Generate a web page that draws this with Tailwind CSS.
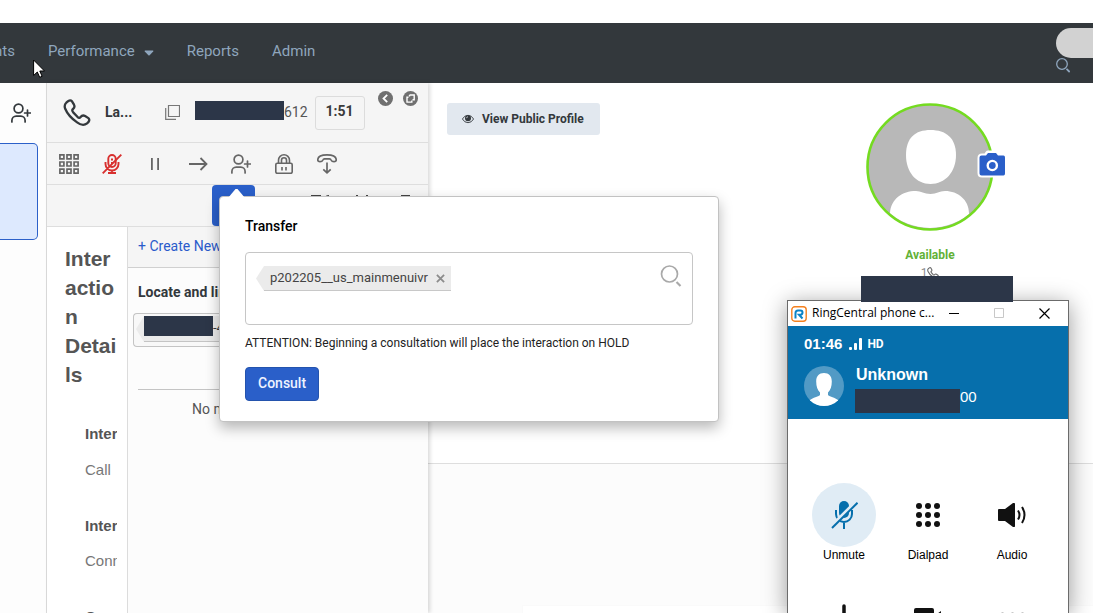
<!DOCTYPE html>
<html lang="en">
<head>
  <meta charset="UTF-8" />
  <meta name="viewport" content="width=device-width, initial-scale=1.0" />
  <title>Agent Workspace</title>
  <script src="https://cdn.jsdelivr.net/npm/@tailwindcss/browser@4"></script>
</head>
<body class="relative flex flex-col h-screen overflow-hidden bg-white font-[Roboto,sans-serif] text-[#33383c]">

  <!-- Navigation -->
  <header class="mt-[23px] h-[60px] shrink-0 flex justify-between bg-[#33383c] text-[15px] text-[#8fa6bd]">
    <nav class="flex items-center gap-[33px] pb-1">
      <a href="#" class="-ml-[6px]">nts</a>
      <a href="#" class="flex items-center gap-[9px]">Performance
        <svg class="w-[10px] h-[6px] mt-1" viewBox="0 0 10 6" fill="currentColor"><path d="M1 .5h8q.8.3.2 1L5.600 5.200q-.6.5-1.200 0L.8 1.500Q.2.8 1 .5z"/></svg>
      </a>
      <a href="#">Reports</a>
      <a href="#">Admin</a>
    </nav>
    <div class="w-[37px] pt-[5px]">
      <div class="h-[30px] rounded-l-full bg-[#d2d2d2]"></div>
      <button aria-label="Search" class="block">
        <svg class="w-[14px] h-[15px]" viewBox="0 0 14 15" fill="none" stroke="currentColor" stroke-width="1.300"><circle cx="6" cy="6" r="5.300"/><path d="M10.500 10.800l3.200 3.200" stroke-width="1.800"/></svg>
      </button>
    </div>
  </header>

  <main class="flex flex-1 min-h-0">

    <!-- Contact rail -->
    <aside class="w-[47px] shrink-0 border-r border-[#dcdcdc] bg-[#fdfdfd]">
      <button aria-label="Add contact" class="block ml-[11px] mt-5">
        <svg class="w-5 h-5" viewBox="0 0 20 20" fill="none" stroke="currentColor" stroke-width="1.700" stroke-linecap="round"><circle cx="7.500" cy="5.500" r="4.400"/><path d="M.9 19v-1.500a4.300 4.300 0 0 1 4.300-4.300h4.600a4.300 4.300 0 0 1 4.300 4.300V19M16.500 7v6M13.600 10h5.900"/></svg>
      </button>
      <div class="mt-5 w-[38px] h-[97px] rounded-r-[5px] border border-l-0 border-[#2b60c9] bg-[#dde9fe]"></div>
    </aside>

    <!-- Interaction panel -->
    <section class="relative z-10 w-[381px] shrink-0 flex flex-col bg-[#f5f5f5] shadow-[2px_0_4px_rgba(0,0,0,0.15)]">

      <div class="h-[60px] shrink-0 flex items-center border-b border-[#dedede] pl-4">
        <svg class="w-[28px] h-[28px]" viewBox="0 0 28 28" fill="none" stroke="currentColor" stroke-width="2.300" stroke-linejoin="round"><path d="M3.200 3.800C5 1.500 7.500.7 9 2.300l2 3.400c1 1.900.6 3-1 4.300-1.200 1-1 1.900.2 3.400l4.200 4.400c1.400 1.200 2.300 1.300 3.200.2 1.300-1.700 2.700-2 4.500-1l3.300 2.100c1.600 1.300.9 3.600-1.300 5.300-2.600 2-6 2-10-1C8.500 19.600 4.300 14.800 2.200 9.800c-.9-2.400-.5-4.500 1-6z"/></svg>
        <span class="ml-[14px] w-[60px] pb-[2px] text-sm font-bold">La...</span>
        <button aria-label="Copy" class="text-[#777]">
          <svg class="w-[15px] h-[15px]" viewBox="0 0 15 15" fill="none" stroke="currentColor"><path d="M3.500.5h11v11h-11z" stroke-width="1.200"/><path d="M.7 3v11.300H11" stroke-width="1.200"/></svg>
        </button>
        <span class="ml-[15px] w-[89px] h-[19px] -mt-1 bg-[#2c3648]"></span>
        <span class="pb-[2px] text-sm text-[#555]">612</span>
        <span class="ml-[7px] w-[50px] h-[34px] flex items-center justify-center pb-1 rounded-[3px] border border-[#dcdcdc] text-sm font-bold text-[#3b3b3b]">1:51</span>
        <div class="self-start flex gap-[10px] ml-[13px] mt-2">
          <button aria-label="Back">
            <svg class="w-[15px] h-[15px]" viewBox="0 0 15 15"><circle cx="7.500" cy="7.500" r="7.500" fill="#707070"/><path d="M9.200 3.800L5.500 7.500l3.700 3.700" fill="none" stroke="#fff" stroke-width="1.800"/></svg>
          </button>
          <button aria-label="Pop out">
            <svg class="w-[15px] h-[15px]" viewBox="0 0 15 15" fill="none" stroke="#fff" stroke-width="1.400"><circle cx="7.500" cy="7.500" r="7.500" fill="#707070" stroke="none"/><path d="M6.500 4h4.700v4.700H9.500M6.500 4v1.500M5.500 6.300H4v4.800h4.800V9.500"/></svg>
          </button>
        </div>
      </div>

      <!-- Call controls -->
      <div class="h-[42px] shrink-0 flex border-b border-[#dedede] text-[#666]">
        <button aria-label="Keypad" class="w-[43px] flex items-center justify-center">
          <svg class="w-[20px] h-[20px]" viewBox="0 0 20 20" fill="none" stroke="currentColor" stroke-width="1.700"><path d="M.9.9h4v4h-4zM8 .9h4v4H8zM15.100.9h4v4h-4zM.9 8h4v4h-4zM8 8h4v4H8zM15.100 8h4v4h-4zM.9 15.100h4v4h-4zM8 15.100h4v4H8zM15.100 15.100h4v4h-4z"/></svg>
        </button>
        <button aria-label="Unmute microphone" class="w-[43px] flex items-center justify-center text-[#d8302f]">
          <svg class="w-[20px] h-[20px]" viewBox="0 0 20 20" fill="none" stroke="currentColor" stroke-width="1.900"><rect x="6.300" y="1" width="7.400" height="12" rx="3.700"/><path d="M3.500 8v2a6.500 6.500 0 0 0 13 0V8M10 16.500V19M6 19h8M.7 19.300L19.300.7M9 9h3M9 5.500h2"/></svg>
        </button>
        <button aria-label="Pause" class="w-[43px] flex items-center justify-center">
          <svg class="w-[10px] h-[12px]" viewBox="0 0 10 12" fill="currentColor"><path d="M1 0h1.800v12H1zM7.200 0H9v12H7.200z"/></svg>
        </button>
        <button aria-label="Forward" class="w-[43px] flex items-center justify-center">
          <svg class="w-[20px] h-[14px]" viewBox="0 0 20 14" fill="none" stroke="currentColor" stroke-width="1.800"><path d="M1 7h17.500M12.500 1l6 6-6 6"/></svg>
        </button>
        <button aria-label="Transfer call" class="w-[43px] flex items-center justify-center">
          <svg class="w-5 h-5" viewBox="0 0 20 20" fill="none" stroke="currentColor" stroke-width="1.700" stroke-linecap="round"><circle cx="7.500" cy="5.500" r="4.400"/><path d="M.9 19v-1.500a4.300 4.300 0 0 1 4.300-4.300h4.600a4.300 4.300 0 0 1 4.300 4.300V19M16.500 7v6M13.600 10h5.900"/></svg>
        </button>
        <button aria-label="Lock" class="w-[43px] flex items-center justify-center">
          <svg class="w-[18px] h-[20px]" viewBox="0 0 18 20" fill="none" stroke="currentColor" stroke-width="1.600"><rect x=".8" y="9.300" width="16.400" height="10" rx="1.500"/><path d="M3.500 9V6.300a5.500 5.500 0 0 1 11 0V9M6.500 9V6.300a2.500 2.500 0 0 1 5 0V9M7 13v3.500M11 13v3.500"/></svg>
        </button>
        <button aria-label="Hang up" class="w-[43px] flex items-center justify-center">
          <svg class="w-[20px] h-[20px]" viewBox="0 0 20 20" fill="none" stroke="currentColor" stroke-width="1.700" stroke-linejoin="round"><path d="M.8 5.500C1 2.300 5 .9 10 .9s9 1.400 9.200 4.600c.1 1.600-.8 2.200-2.200 2.200-1.600 0-2.400-.6-2.900-1.700-.3-.8-.8-1.200-1.600-1.200h-5c-.8 0-1.300.4-1.600 1.200C5.400 7.100 4.600 7.700 3 7.700 1.600 7.700.7 7.100.8 5.500zM10 8.500v10.300M6.300 15.300l3.700 3.600 3.700-3.600"/></svg>
        </button>
      </div>

      <!-- Tabs -->
      <div class="h-[42px] shrink-0 flex items-start border-b border-[#dedede] pl-[165px]">
        <button aria-label="Transfer tab" class="w-[43px] h-[41px] rounded-[4px] bg-[#2a5fc9]"></button>
        <svg class="ml-[56px] mt-[9px] w-[100px] h-3" viewBox="0 0 100 12" fill="none" stroke="#444" stroke-width="2"><path d="M0 2h10M5 1v10M15 11V4q0-2 3-2M46 1v10M56 1v10M91 11V2h8"/></svg>
      </div>

      <div class="flex flex-1 min-h-0">
        <div class="w-[81px] shrink-0 border-r border-[#dcdcdc] bg-white px-[10px] pl-[18px] pt-[17px] font-['Liberation_Sans',sans-serif] text-[#555]">
          <h2 class="w-[52px] text-[21px] leading-[29px] font-bold break-words">Interaction Details</h2>
          <dl class="w-[32px] ml-5 mt-[35px] overflow-hidden text-[15px] leading-5 whitespace-nowrap">
            <dt class="font-bold">Inter</dt>
            <dd class="mt-4 mb-9 text-[#777]">Call</dd>
            <dt class="font-bold">Inter</dt>
            <dd class="mt-[15px] mb-9 text-[#777]">Conn</dd>
            <dt class="font-bold">C</dt>
          </dl>
        </div>

        <div class="flex-1 min-w-0 bg-[#fcfcfc] text-sm whitespace-nowrap overflow-hidden">
          <div class="h-[41px] flex items-center border-b border-[#d0d0d0] bg-[#f5f5f5] pl-[10px] pb-[2px]">
            <a href="#" class="text-[#2a5bcb]">+ Create New</a>
          </div>
          <h3 class="pl-[10px] mt-[14px] leading-5 font-bold">Locate and link</h3>
          <div class="mt-[11px] ml-[5px] h-[34px] flex rounded-[4px] border border-r-0 border-[#c4c4c4] bg-[#f8f8f8] pl-[2px] pt-[2px]">
            <svg class="w-2 h-[26px]" viewBox="0 0 8 26"><path d="M8 0v26L0 13z" fill="#ebebeb"/></svg>
            <div class="flex h-[26px] flex-1 border-b border-[#c4c4c4] bg-[#ebebeb]">
              <span class="w-[69px] h-5 bg-[#2c3648]"></span>
              <span class="leading-6 text-[13px]">-4</span>
            </div>
          </div>
          <div class="ml-[10px] mt-[42px] border-t border-[#c4c4c4] pt-[9px] pl-[54px] text-[#555]">No matches</div>
        </div>
      </div>
    </section>

    <!-- Profile -->
    <section class="flex-1 min-w-0 flex flex-col bg-[#fcfcfc]">
      <div class="h-[381px] shrink-0 flex items-start justify-between border-b border-[#dedede] bg-white pl-[19px] pr-[99px] pt-5">
        <button class="h-8 flex items-center gap-2 rounded-[3px] bg-[#e2e8ef] pl-[15px] pr-4 text-xs font-bold">
          <svg class="w-3 h-[10px]" viewBox="0 0 12 10"><path d="M.4 5Q2.500 1.300 6 1.300T11.600 5Q9.500 8.700 6 8.700T.4 5z" fill="none" stroke="currentColor" stroke-width=".9"/><circle cx="6" cy="4.300" r="3" fill="currentColor"/><path d="M4.500 4.200Q4.600 2.800 6 2.700" fill="none" stroke="#e2e8ef" stroke-width=".7"/></svg>
          View Public Profile
        </button>
        <div class="relative w-32 flex flex-col items-center">
          <svg class="w-32 h-32" viewBox="0 0 128 128">
            <clipPath id="face"><circle cx="64" cy="64" r="61"/></clipPath>
            <circle cx="64" cy="64" r="62.500" fill="#b8b8b8"/>
            <g clip-path="url(#face)" fill="#fff">
              <path d="M64.500 27C80 27 90 35 90 52c0 17-11 29-25.500 29S40 69 40 52c0-17 9-25 24.500-25z"/>
              <path d="M24 128v-18c1-14 12-22 26-22 5 0 8 3 14.500 3S73 88 79 88c13 0 24 9 24 22v18z"/>
            </g>
            <circle cx="64" cy="64" r="62.500" fill="none" stroke="#74db20" stroke-width="2.600"/>
          </svg>
          <button aria-label="Change photo" class="absolute left-[111px] top-[47px]">
            <svg class="w-[30px] h-[29px]" viewBox="0 0 30 29"><path d="M5 6h4l2-3h8l2 3h4q2 0 2 2v15q0 2-2 2H5q-2 0-2-2V8q0-2 2-2z" fill="#2a5fc9" stroke="#fff" stroke-width="5" stroke-linejoin="round"/><path d="M4.500 5.500H9L11 3h8l2 2.500h5.500Q28 5.500 28 7.500v16q0 2-1.500 2h-22q-2 0-2-2v-16q0-2 2-2z" fill="#2a5fc9"/><circle cx="15.300" cy="15.500" r="4.600" fill="none" stroke="#fff" stroke-width="2.400"/></svg>
          </button>
          <p class="mt-4 text-xs leading-4 font-bold text-[#62b137]">Available</p>
          <p class="mt-[2px] flex items-center text-xs leading-4 text-[#8d8d8d]">1
            <svg class="w-3 h-3" viewBox="0 0 28 28" fill="none" stroke="#666" stroke-width="2.500"><path d="M3.200 3.800C5 1.500 7.500.7 9 2.300l2 3.400c1 1.900.6 3-1 4.300-1.200 1-1 1.900.2 3.400l4.200 4.400c1.400 1.200 2.300 1.300 3.200.2 1.300-1.700 2.700-2 4.500-1l3.300 2.100c1.600 1.300.9 3.600-1.300 5.300-2.600 2-6 2-10-1C8.500 19.600 4.300 14.800 2.200 9.800c-.9-2.400-.5-4.500 1-6z"/></svg>
          </p>
        </div>
      </div>
      <div class="mt-[141px] ml-[94px] flex-1 bg-white border-t border-l border-[#fafafa]"></div>
    </section>
  </main>

  <!-- Transfer popover -->
  <div role="dialog" aria-labelledby="transferTitle" class="absolute z-20 left-[219px] top-[196px] w-[500px] rounded-[4px] border border-[#c2c2c2] bg-white px-[25px] pt-[19px] pb-5 shadow-[0_6px_14px_rgba(0,0,0,0.28)]">
    <svg class="absolute left-2 -top-[9px] w-[17px] h-[10px]" viewBox="0 0 17 10"><path d="M0 10l7.500-9h2L17 10z" fill="#fff"/></svg>
    <h2 id="transferTitle" class="text-sm font-medium leading-5 text-black">Transfer</h2>
    <div class="mt-4 h-[73px] flex items-start justify-between rounded-[4px] border border-[#c6c6c6] px-[10px] pt-3">
      <div class="flex mt-px h-[25px] text-[13px] text-[#444]">
        <svg class="w-2 h-[25px]" viewBox="0 0 8 25"><path d="M8 0v25L0 12.500z" fill="#ebebeb"/></svg>
        <span class="flex items-center gap-2 border-b border-[#c8c8c8] bg-[#ebebeb] pl-[6px] pr-[6px]">p202205__us_mainmenuivr
          <button aria-label="Remove">
            <svg class="w-[9px] h-[9px]" viewBox="0 0 10 10" stroke="#8c8c8c" stroke-width="2"><path d="M1 1l8 8M9 1L1 9"/></svg>
          </button>
        </span>
      </div>
      <button aria-label="Search contacts">
        <svg class="w-[22px] h-[22px]" viewBox="0 0 22 22" fill="none" stroke="#a9a9a9"><circle cx="9.500" cy="9" r="8" stroke-width="1.700"/><path d="M16.500 17l4 4" stroke-width="2.200"/></svg>
      </button>
    </div>
    <p class="mt-[10px] text-xs leading-4 text-[#222]">ATTENTION: Beginning a consultation will place the interaction on HOLD</p>
    <button class="mt-4 h-[34px] rounded-[4px] border border-[#2453ad] bg-[#2a5fc9] px-3 pb-[2px] text-sm font-medium text-[#eef3ff]">Consult</button>
  </div>

  <!-- Softphone window -->
  <div class="absolute z-20 right-6 top-[300px] bottom-0 w-[282px] overflow-hidden border border-b-0 border-[#6b6b6b] bg-white shadow-[0_4px_22px_rgba(0,0,0,0.4)] font-['Liberation_Sans',sans-serif]">
    <div class="h-[25px] flex items-center pl-[3px] font-['Open_Sans',sans-serif] text-xs text-black">
      <svg class="w-4 h-4" viewBox="0 0 16 16" fill="none"><rect x=".8" y=".8" width="14.400" height="14.400" rx="3" fill="#fff" stroke="#f48120" stroke-width="1.400"/><path d="M4.500 12.500V7q0-2.500 2.500-2.500h2.500q2 0 2 2T9.500 8.700H8l3.500 3.800" stroke="#0a83c6" stroke-width="2"/></svg>
      <span class="ml-[5px] pb-px">RingCentral phone c...</span>
      <div class="ml-auto flex items-center gap-[34px] pr-[18px]">
        <button aria-label="Minimize"><svg class="w-[11px] h-[11px]" viewBox="0 0 11 11"><path d="M0 5.500h10" stroke="#000"/></svg></button>
        <button aria-label="Maximize" disabled><svg class="w-[11px] h-[11px]" viewBox="0 0 11 11"><path d="M.5.5h9v9h-9z" fill="none" stroke="#c8c8c8"/></svg></button>
        <button aria-label="Close"><svg class="w-[11px] h-[11px]" viewBox="0 0 11 11"><path d="M.5.5l10 10M10.500.5l-10 10" stroke="#000" stroke-width="1.200"/></svg></button>
      </div>
    </div>
    <div class="h-[93px] bg-[#066fac] px-4 pt-2 text-white">
      <div class="flex items-center text-[15px] leading-5 font-bold">01:46
        <svg class="ml-[7px] w-[13px] h-3" viewBox="0 0 13 12" fill="currentColor"><rect y="9" width="3" height="3" rx="1"/><rect x="5" y="5" width="3" height="7" rx="1"/><rect x="10" width="3" height="12" rx="1"/></svg>
        <span class="ml-[5px] font-[Roboto,sans-serif] text-xs">HD</span>
      </div>
      <div class="flex mt-[10px] gap-[11px]">
        <svg class="w-10 h-10 mt-[2px]" viewBox="0 0 40 40">
          <clipPath id="caller"><circle cx="20" cy="20" r="20"/></clipPath>
          <g clip-path="url(#caller)"><path d="M0 0h40v40H0z" fill="#529ac5"/><path d="M20 7c5 0 7.800 3 7.800 8.500 0 5-1.300 8.500-3.800 11v2.500c2 2 7 2.500 10 5V40H6v-6c3-2.500 8-3 10-5v-2.500c-2.500-2.500-3.800-6-3.800-11C12.200 10 15 7 20 7z" fill="#fff"/></g>
        </svg>
        <div>
          <p class="mt-px ml-px text-base leading-5 font-bold">Unknown</p>
          <p class="mt-1 flex text-[15px] leading-4"><span class="w-[105px] h-6 bg-[#2c3648]"></span>00</p>
        </div>
      </div>
    </div>
    <div class="grid grid-cols-3 gap-y-[23px] px-[14px] pt-16 text-xs leading-4 text-black">
      <button class="flex flex-col items-center">
        <span class="w-16 h-16 flex items-center justify-center rounded-full bg-[#e0ecf5]">
          <svg class="w-[28px] h-[28px]" viewBox="0 0 28 28"><rect x="9" y="0" width="10" height="17" rx="5" fill="#066fac"/><path d="M6 9v4a8 8 0 0 0 16 0V9M14 21v7" fill="none" stroke="#066fac" stroke-width="2"/><path d="M1 26L26.500.5" stroke="#e0ecf5" stroke-width="4"/><path d="M2 27L27.500 1.800" stroke="#066fac" stroke-width="2"/></svg>
        </span>Unmute
      </button>
      <button class="flex flex-col items-center">
        <span class="w-16 h-16 flex items-center justify-center">
          <svg class="w-6 h-6" viewBox="0 0 24 24" fill="#111"><circle cx="3" cy="3" r="3"/><circle cx="12" cy="3" r="3"/><circle cx="21" cy="3" r="3"/><circle cx="3" cy="12" r="3"/><circle cx="12" cy="12" r="3"/><circle cx="21" cy="12" r="3"/><circle cx="3" cy="21" r="3"/><circle cx="12" cy="21" r="3"/><circle cx="21" cy="21" r="3"/></svg>
        </span>Dialpad
      </button>
      <button class="flex flex-col items-center">
        <span class="w-16 h-16 flex items-center justify-center">
          <svg class="w-[28px] h-6" viewBox="0 0 28 24" fill="#111"><path d="M1 6h6l8-6q2-.5 2 1v22q0 1.500-2 1l-8-6H1q-1 0-1-1V7q0-1 1-1z"/><path d="M20 7.500q3 4.500 0 9M24 4q5 8 0 16" fill="none" stroke="#111" stroke-width="2"/></svg>
        </span>Audio
      </button>
      <button aria-label="Add" class="flex items-center justify-center h-16"><svg class="w-7 h-7" viewBox="0 0 28 28" stroke="#111" stroke-width="3.500" stroke-linecap="round"><path d="M14 2v24M2 14h24"/></svg></button>
      <button aria-label="Video" class="flex items-center justify-center h-16"><svg class="w-7 h-5" viewBox="0 0 28 20" fill="#111"><path d="M2 0h16q2 0 2 2v16q0 2-2 2H2q-2 0-2-2V2q0-2 2-2zM21.500 7L27 3v14l-5.500-4z"/></svg></button>
      <button aria-label="More" class="flex items-center justify-center h-16"><svg class="w-[27px] h-3" viewBox="0 0 27 12" fill="#111"><circle cx="3.500" cy="4" r="3.300"/><circle cx="13.500" cy="4" r="3.300"/><circle cx="23.500" cy="4" r="3.300"/></svg></button>
    </div>
  </div>

  <!-- Masked agent name -->
  <div class="absolute z-30 right-20 top-[276px] w-[152px] h-[26px] bg-[#2c3648]"></div>

  <!-- Pointer -->
  <svg class="absolute z-30 left-[33px] top-[59px] w-3 h-[19px]" viewBox="0 0 12 19"><path d="M.6 1v15.500L4.300 13l2.400 5.300 2.400-1L6.800 12h4.700z" fill="#fff" stroke="#000"/></svg>

</body>
</html>
